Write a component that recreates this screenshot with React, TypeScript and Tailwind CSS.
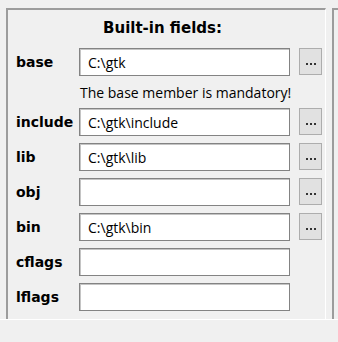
import React from "react";

type Field = {
  name: string;
  value: string;
  browse: boolean;
  note?: string;
};

const fields: Field[] = [
  { name: "base", value: "C:\\gtk", browse: true, note: "The base member is mandatory!" },
  { name: "include", value: "C:\\gtk\\include", browse: true },
  { name: "lib", value: "C:\\gtk\\lib", browse: true },
  { name: "obj", value: "", browse: true },
  { name: "bin", value: "C:\\gtk\\bin", browse: true },
  { name: "cflags", value: "", browse: false },
  { name: "lflags", value: "", browse: false },
];

const labelFont = { fontFamily: '"DejaVu Sans", Verdana, sans-serif' };
const textFont = { fontFamily: '"Open Sans", "Noto Sans", sans-serif' };

const BrowseButton = () => (
  <button
    type="button"
    className="flex h-[27px] w-[23px] shrink-0 items-end justify-center gap-[2px] border border-[#adadad] bg-[#e1e1e1] pb-[9px]"
  >
    <span className="h-[2px] w-[2px] bg-[#333]" />
    <span className="h-[2px] w-[2px] bg-[#333]" />
    <span className="h-[2px] w-[2px] bg-[#333]" />
  </button>
);

const FieldRow = ({ field }: { field: Field }) => (
  <div className="flex flex-col">
    <div className="flex items-start">
      <label
        className="w-[71px] shrink-0 pl-[8px] text-[14px] font-bold leading-[28px] text-black"
        style={labelFont}
      >
        {field.name}
      </label>
      <input
        readOnly
        value={field.value}
        className="h-[28px] w-[211px] border border-[#838383] bg-white pl-[8px] text-[14px] text-black shadow-[inset_1px_1px_0_#c4c4c4] outline-none"
        style={textFont}
      />
      {field.browse && (
        <div className="ml-[9px]">
          <BrowseButton />
        </div>
      )}
    </div>
    {field.note && (
      <p
        className="ml-[72px] mt-[9px] text-[14px] leading-[16px] text-black"
        style={textFont}
      >
        {field.note}
      </p>
    )}
  </div>
);

export default function App() {
  return (
    <div className="h-[342px] w-[338px] overflow-hidden bg-[#f0f0f0]">
      <div className="flex h-[320px] gap-[6px] border-b border-white pl-[6px] pt-[8px]">
        {/* Built-in fields group */}
        <section className="w-[320px] shrink-0 border-l-2 border-t-2 border-r border-l-[#9c9c9c] border-t-[#9c9c9c] border-r-white">
          <h2
            className="mt-[9px] pr-[8px] text-center text-[15px] font-bold leading-[18px] text-black"
            style={labelFont}
          >
            Built-in fields:
          </h2>
          <div className="mt-[11px] flex flex-col gap-[7px]">
            {fields.map((f) => (
              <FieldRow key={f.name} field={f} />
            ))}
          </div>
        </section>
        {/* neighbouring group, clipped */}
        <section className="w-[20px] shrink-0 border-l-2 border-t-2 border-[#9c9c9c]" />
      </div>
    </div>
  );
}
